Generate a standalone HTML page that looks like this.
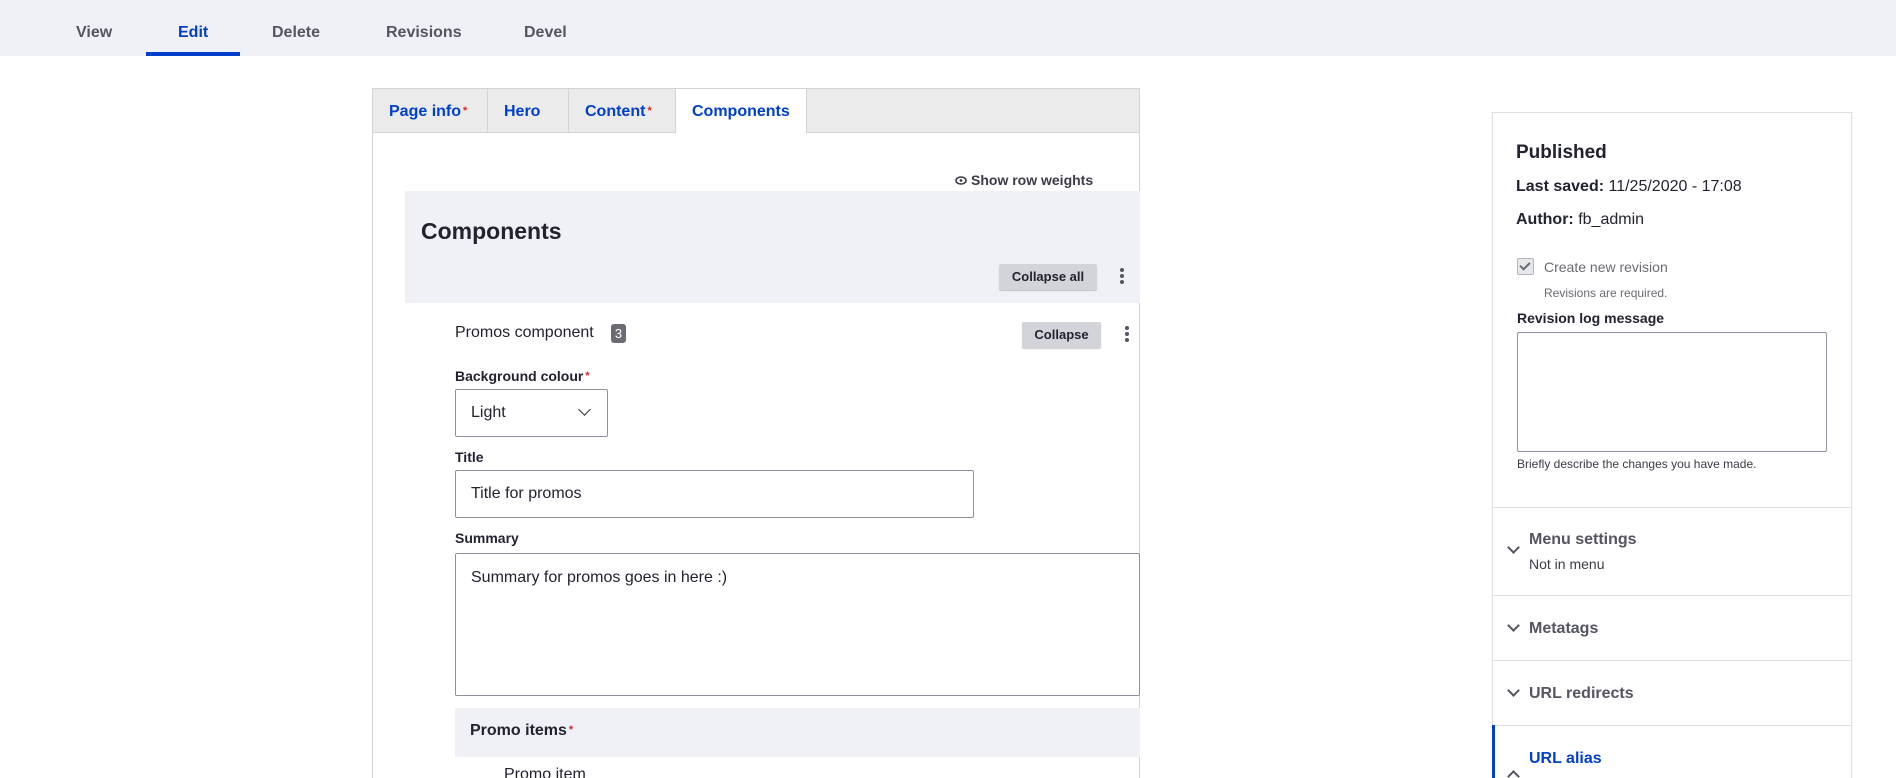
<!DOCTYPE html>
<html><head><meta charset="utf-8">
<style>
*{box-sizing:border-box;margin:0;padding:0}
html,body{width:1896px;height:778px;overflow:hidden}
body{background:#fff;font-family:"Liberation Sans",sans-serif;color:#222330;position:relative}
.a{position:absolute;white-space:nowrap}
.top{position:absolute;left:0;top:0;width:1896px;height:56px;background:#f0f1f6}
.tt{font-size:16px;font-weight:bold;color:#545560;top:24px}
.tabs{position:absolute;left:372px;top:88px;width:768px;height:760px;border:1px solid #d4d4d8}
.tabrow{position:absolute;left:372px;top:88px;width:768px;height:45px;background:#ebebeb;border:1px solid #d4d4d8}
.tab{position:absolute;top:88px;height:45px;border:1px solid #d4d4d8;background:#ebebeb;font-size:16px;font-weight:bold;color:#003ecc;padding-top:14px;padding-left:16px}
.req{color:#dc2323;font-size:11px;position:relative;top:-2px;margin-left:2px}
.btn{position:absolute;background:#d3d4d9;border-radius:2px;font-size:13px;font-weight:bold;text-align:center;color:#222330;box-shadow:0 1px 1px rgba(0,0,0,.2)}
.dots{position:absolute;width:4px}
.dots i{display:block;width:4px;height:4px;border-radius:2px;background:#545560;margin-bottom:2px}
.lbl{font-size:14px;font-weight:bold}
.inp{position:absolute;border:1px solid #8e929c;border-radius:2px;background:#fff;font-size:16px;padding-left:15px}
.sb{position:absolute;left:1492px;top:112px;width:360px;height:760px;border:1px solid #dedfe4;box-shadow:0 1px 2px rgba(0,0,0,.05)}
.hr{position:absolute;left:1492px;width:360px;height:1px;background:#dedfe4}
.st{font-size:16px;font-weight:bold;color:#545560}
.chev{position:absolute;width:9px;height:9px;border-right:2px solid #545560;border-bottom:2px solid #545560;transform:rotate(45deg)}
</style></head><body>
<div class="top"></div>
<div class="a tt" style="left:76px">View</div>
<div class="a tt" style="left:178px;color:#003ecc">Edit</div>
<div class="a" style="left:146px;top:52px;width:94px;height:4px;background:#003ecc"></div>
<div class="a tt" style="left:272px">Delete</div>
<div class="a tt" style="left:386px">Revisions</div>
<div class="a tt" style="left:524px">Devel</div>

<div class="tabs"></div>
<div class="tabrow"></div>
<div class="tab" style="left:372px;width:116px">Page info<span class="req">*</span></div>
<div class="tab" style="left:487px;width:82px">Hero</div>
<div class="tab" style="left:568px;width:108px">Content<span class="req">*</span></div>
<div class="tab" style="left:675px;width:132px;background:#fff;border-bottom-color:#fff;height:46px">Components</div>

<div class="a" style="left:955px;top:172px;font-size:14px;font-weight:bold;color:#3b3c47"><svg width="12" height="9" viewBox="0 0 12 9" style="margin-right:4px"><ellipse cx="6" cy="4.5" rx="5" ry="3.5" fill="none" stroke="#3b3c47" stroke-width="1.6"/><circle cx="6" cy="4.5" r="1.4" fill="#3b3c47"/></svg>Show row weights</div>

<div class="a" style="left:405px;top:191px;width:735px;height:112px;background:#f0f1f6"></div>
<div class="a" style="left:421px;top:218px;font-size:23px;font-weight:bold">Components</div>
<div class="btn" style="left:999px;top:264px;width:98px;height:26px;line-height:26px">Collapse all</div>
<div class="dots" style="left:1120px;top:268px"><i></i><i></i><i></i></div>

<div class="a" style="left:455px;top:324px;font-size:16px">Promos component</div>
<div class="a" style="left:611px;top:324px;width:15px;height:19px;background:#6a6b73;color:#fff;border-radius:3px;font-size:13px;text-align:center;line-height:19px">3</div>
<div class="btn" style="left:1022px;top:322px;width:79px;height:26px;line-height:26px">Collapse</div>
<div class="dots" style="left:1125px;top:326px"><i></i><i></i><i></i></div>

<div class="a lbl" style="left:455px;top:368px">Background colour<span class="req">*</span></div>
<div class="inp" style="left:455px;top:389px;width:153px;height:48px;line-height:46px">Light</div>
<div class="chev" style="left:580px;top:405px;border-color:#333;border-width:1.5px"></div>
<div class="a lbl" style="left:455px;top:449px">Title</div>
<div class="inp" style="left:455px;top:470px;width:519px;height:48px;line-height:46px">Title for promos</div>
<div class="a lbl" style="left:455px;top:530px">Summary</div>
<div class="inp" style="left:455px;top:553px;width:685px;height:143px;padding-top:15px">Summary for promos goes in here :)</div>
<div class="a" style="left:455px;top:708px;width:685px;height:49px;background:#f0f1f6"></div>
<div class="a" style="left:470px;top:722px;font-size:16px;font-weight:bold">Promo items<span class="req">*</span></div>
<div class="a" style="left:504px;top:766px;font-size:16px">Promo item</div>

<div class="sb"></div>
<div class="a" style="left:1516px;top:142px;font-size:19px;font-weight:bold">Published</div>
<div class="a" style="left:1516px;top:178px;font-size:16px"><b>Last saved:</b> 11/25/2020 - 17:08</div>
<div class="a" style="left:1516px;top:211px;font-size:16px"><b>Author:</b> fb_admin</div>
<div class="a" style="left:1517px;top:258px;width:17px;height:17px;border:1px solid #b5b6bd;border-radius:2px;background:#e6e7ea"></div>
<div class="a" style="left:1522px;top:260px;width:6px;height:10px;border-right:2px solid #6a6b73;border-bottom:2px solid #6a6b73;transform:rotate(45deg)"></div>
<div class="a" style="left:1544px;top:259px;font-size:14px;color:#6a6b73">Create new revision</div>
<div class="a" style="left:1544px;top:286px;font-size:12px;color:#6a6b73">Revisions are required.</div>
<div class="a" style="left:1517px;top:310px;font-size:14px;font-weight:bold">Revision log message</div>
<div class="a" style="left:1517px;top:332px;width:310px;height:120px;border:1px solid #8e929c;border-radius:2px"></div>
<div class="a" style="left:1517px;top:457px;font-size:12px;color:#3b3c47">Briefly describe the changes you have made.</div>
<div class="hr" style="top:507px"></div>
<div class="chev" style="left:1509px;top:543px"></div>
<div class="a st" style="left:1529px;top:531px">Menu settings</div>
<div class="a" style="left:1529px;top:556px;font-size:14px;color:#3b3c47">Not in menu</div>
<div class="hr" style="top:595px"></div>
<div class="chev" style="left:1509px;top:621px"></div>
<div class="a st" style="left:1529px;top:620px">Metatags</div>
<div class="hr" style="top:660px"></div>
<div class="chev" style="left:1509px;top:686px"></div>
<div class="a st" style="left:1529px;top:685px">URL redirects</div>
<div class="hr" style="top:725px"></div>
<div class="a" style="left:1492px;top:725px;width:3px;height:60px;background:#003ecc"></div>
<div class="a st" style="left:1529px;top:750px;color:#003ecc">URL alias</div>
<div class="chev" style="left:1509px;top:772px;transform:rotate(-135deg)"></div>
</body></html>
